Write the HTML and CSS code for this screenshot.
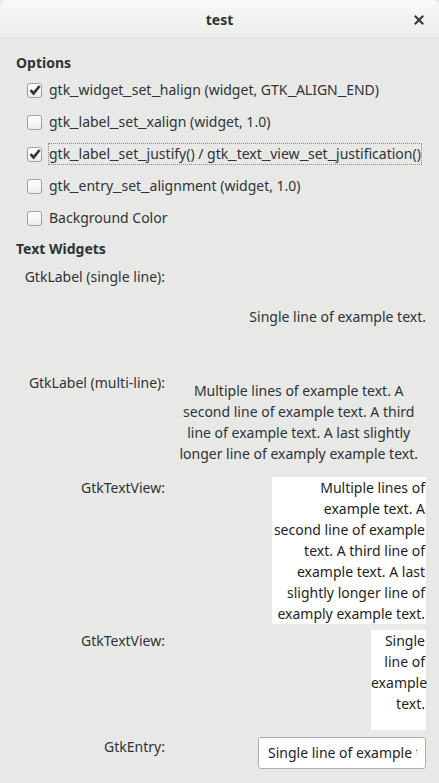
FILE: index.html
```html
<!DOCTYPE html>
<html>
<head>
<meta charset="utf-8">
<link rel="stylesheet" href="styles.css">
</head>
<body>
<div class="window">
  <header class="titlebar">
    <span class="title">test</span>
    <svg class="close" width="10" height="10" viewBox="0 0 10 10"><path d="M1.5 1.5 L8.5 8.5 M8.5 1.5 L1.5 8.5" stroke="#2e3436" stroke-width="2" stroke-linecap="square"/></svg>
  </header>
  <main class="content">
    <h2 class="section">Options</h2>
    <ul class="options">
      <li class="opt"><span class="check checked"><svg width="12" height="12" viewBox="0 0 12 12"><path d="M1.6 6.2 L4.6 9.4 L10.6 2" fill="none" stroke="#2e3436" stroke-width="2.6" stroke-linejoin="miter"/></svg></span><span class="opt-text">gtk<span class="u">_</span>widget<span class="u">_</span>set<span class="u">_</span>halign (widget, GTK<span class="u">_</span>ALIGN<span class="u">_</span>END)</span></li>
      <li class="opt"><span class="check"></span><span class="opt-text">gtk<span class="u">_</span>label<span class="u">_</span>set<span class="u">_</span>xalign (widget, 1.0)</span></li>
      <li class="opt"><span class="check checked"><svg width="12" height="12" viewBox="0 0 12 12"><path d="M1.6 6.2 L4.6 9.4 L10.6 2" fill="none" stroke="#2e3436" stroke-width="2.6" stroke-linejoin="miter"/></svg></span><span class="opt-text focused">gtk<span class="u">_</span>label<span class="u">_</span>set<span class="u">_</span>justify() / gtk<span class="u">_</span>text<span class="u">_</span>view<span class="u">_</span>set<span class="u">_</span>justification()</span></li>
      <li class="opt"><span class="check"></span><span class="opt-text">gtk<span class="u">_</span>entry<span class="u">_</span>set<span class="u">_</span>alignment (widget, 1.0)</span></li>
      <li class="opt"><span class="check"></span><span class="opt-text">Background Color</span></li>
    </ul>
    <h2 class="section section-2">Text Widgets</h2>
    <div class="grid">
      <div class="lbl">GtkLabel (single line):</div>
      <div class="val val-single">Single line of example text.</div>

      <div class="lbl">GtkLabel (multi-line):</div>
      <div class="val val-multi"><div class="multi">Multiple lines of example text. A<br>second line of example text. A third<br>line of example text. A last slightly<br>longer line of examply example text.</div></div>

      <div class="lbl">GtkTextView:</div>
      <div class="val"><div class="textview tv-wide">Multiple lines of<br>example text. A<br>second line of example<br>text. A third line of<br>example text. A last<br>slightly longer line of<br>examply example text.</div></div>

      <div class="lbl">GtkTextView:</div>
      <div class="val"><div class="textview tv-narrow">Single<br>line of<br>example<br>text.</div></div>

      <div class="lbl">GtkEntry:</div>
      <div class="val"><div class="entry"><span class="entry-text">Single line of example text.</span></div></div>
    </div>
  </main>
</div>
</body>
</html>
```

FILE: styles.css
```css
html, body {
  margin: 0;
  padding: 0;
}
body {
  width: 439px;
  height: 783px;
  overflow: hidden;
  background: #e8e8e7;
  font-family: "Noto Sans", "DejaVu Sans", sans-serif;
  font-size: 14px;
  color: #2e3436;
}
.window {
  width: 439px;
  height: 783px;
  background: #e8e8e7;
  border-radius: 6px 6px 0 0;
  overflow: hidden;
}
.titlebar {
  height: 39px;
  box-sizing: border-box;
  display: flex;
  align-items: center;
  justify-content: center;
  position: relative;
  background: linear-gradient(#f9f9f9, #ececeb);
  border-bottom: 1px solid #e2e2e1;
}
.title {
  font-weight: bold;
  font-size: 14px;
  color: #2e3436;
  margin-top: 1px;
}
.close {
  position: absolute;
  right: 15px;
  top: 15px;
}
.content {
  padding: 13px 13px 0 16px;
}
.section {
  margin: 0;
  font-size: 14px;
  font-weight: bold;
  line-height: 21px;
  height: 21px;
}
.options {
  list-style: none;
  margin: 1px 0 0 0;
  padding: 0 0 0 11px;
  display: flex;
  flex-direction: column;
}
.opt {
  display: flex;
  align-items: center;
  height: 32px;
}
.check {
  width: 15px;
  height: 15px;
  box-sizing: border-box;
  border: 1px solid #a1a1a0;
  border-radius: 3px;
  background: linear-gradient(#ffffff, #ededed);
  display: flex;
  align-items: center;
  justify-content: center;
  margin-right: 6px;
  flex: none;
}
.check svg {
  display: block;
}
.opt-text {
  line-height: 20px;
  padding: 0;
  border: 1px dotted transparent;
  white-space: nowrap;
}
.opt-text .u {
  display: inline-block;
  transform: scaleX(1.4);
  margin: 0 1.1px;
}
.opt-text.focused {
  border-color: #8a8c8a;
}
.section-2 {
  margin-top: 4px;
}
.grid {
  display: grid;
  grid-template-columns: 149px 1fr;
  grid-template-rows: 100px 99px auto 100px auto;
  row-gap: 6px;
  margin-top: 7px;
  line-height: 21px;
}
.lbl {
  text-align: right;
  align-self: start;
}
.val {
  display: flex;
  justify-content: flex-end;
  align-items: flex-start;
}
.val-single {
  align-items: center;
}
.val-multi {
  align-items: center;
}
.multi {
  text-align: center;
  padding-right: 8px;
}
.textview {
  background: #ffffff;
  color: #1e1e1e;
  text-align: right;
  padding-right: 1px;
  box-sizing: border-box;
}
.tv-wide {
  width: 154px;
  height: 147px;
}
.tv-narrow {
  width: 55px;
  height: 100px;
}
.entry {
  width: 168px;
  height: 32px;
  margin-top: 1px;
  box-sizing: border-box;
  border: 1px solid #b0b0ae;
  border-radius: 3px;
  background: #ffffff;
  color: #1e1e1e;
  padding: 0 8px 0 9px;
  line-height: 30px;
}
.entry-text {
  display: block;
  white-space: nowrap;
  overflow: hidden;
}
```
